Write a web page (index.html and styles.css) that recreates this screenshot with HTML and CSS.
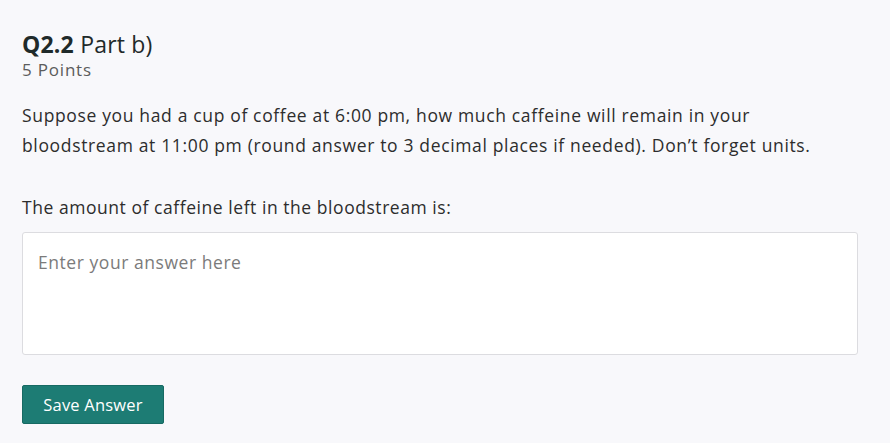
FILE: index.html
```html
<!DOCTYPE html>
<html>
<head>
<meta charset="utf-8">
<link rel="stylesheet" href="styles.css">
</head>
<body>
<div class="question">
  <h2 class="title"><strong>Q2.2</strong> Part b)</h2>
  <div class="points">5 Points</div>
  <p class="prompt">Suppose you had a cup of coffee at 6:00 pm, how much caffeine will remain in your bloodstream at 11:00 pm (round answer to 3 decimal places if needed). Don’t forget units.</p>
  <p class="label">The amount of caffeine left in the bloodstream is:</p>
  <textarea class="answer" placeholder="Enter your answer here"></textarea>
  <button class="save">Save Answer</button>
</div>
</body>
</html>
```
FILE: styles.css
```css
html, body {
  margin: 0;
  padding: 0;
  background: #f8f8fb;
}
body {
  font-family: "Open Sans", "Liberation Sans", sans-serif;
  color: #2d2d2d;
}
.question {
  padding: 29px 32px 0 22px;
  display: flex;
  flex-direction: column;
  align-items: flex-start;
}
.title {
  margin: 0;
  font-size: 23px;
  font-weight: 400;
  letter-spacing: 0.2px;
  line-height: 30px;
  color: #1f2a2a;
}
.title strong {
  font-weight: 700;
}
.points {
  font-size: 17px;
  letter-spacing: 0.8px;
  line-height: 22px;
  color: #5c5c5c;
}
.prompt {
  margin: 19px 0 0 0;
  font-size: 17.5px;
  letter-spacing: 0.65px;
  line-height: 30px;
  max-width: 836px;
}
.label {
  margin: 32px 0 0 0;
  font-size: 17.5px;
  letter-spacing: 0.55px;
  line-height: 30px;
}
.answer {
  margin-top: 10px;
  box-sizing: border-box;
  width: 836px;
  height: 123px;
  border: 1px solid #dcdce0;
  border-radius: 3px;
  background: #fff;
  padding: 17px 15px;
  font-family: inherit;
  font-size: 17.5px;
  letter-spacing: 0.55px;
  resize: none;
}
.answer::placeholder {
  color: #7b7b7b;
}
.save {
  margin-top: 30px;
  width: 142px;
  height: 39px;
  background: #1d7c74;
  color: #fff;
  border: 1px solid #176a63;
  border-radius: 2px;
  font-family: inherit;
  font-size: 16.5px;
  letter-spacing: 0.2px;
}
```
